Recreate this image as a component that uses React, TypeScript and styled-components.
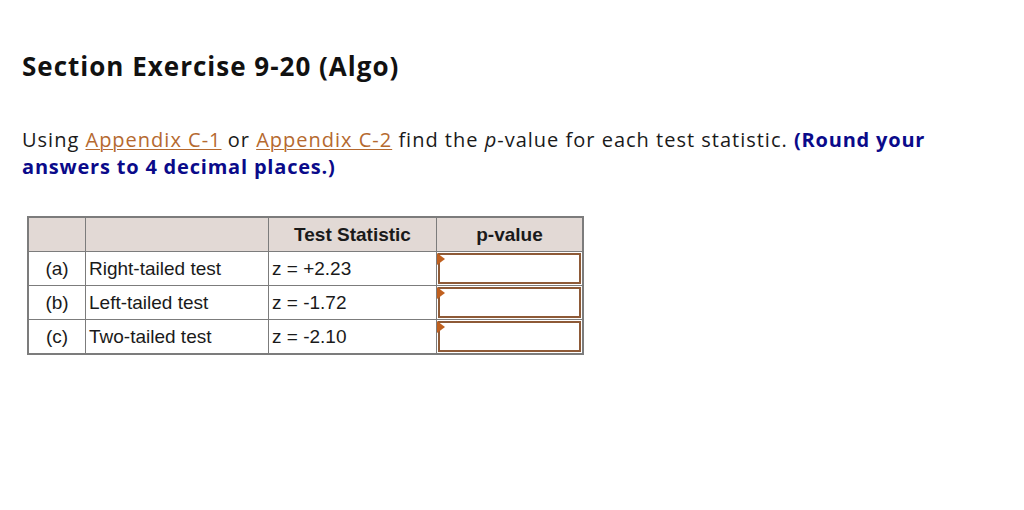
import React from 'react'
import styled, { createGlobalStyle } from 'styled-components'

const GlobalStyle = createGlobalStyle`
body {
  margin: 0;
  background: #ffffff;
  font-family: "Open Sans", Lato, sans-serif;
  color: #111111;
}
`

const rows = [
  { label: '(a)', kind: 'Right-tailed test', stat: 'z = +2.23' },
  { label: '(b)', kind: 'Left-tailed test', stat: 'z = -1.72' },
  { label: '(c)', kind: 'Two-tailed test', stat: 'z = -2.10' },
]

function App() {
  return (
    <>
      <GlobalStyle />
      <Page>
        <Title>Section Exercise 9-20 (Algo)</Title>
        <Prompt>
          Using <Link>Appendix C-1</Link> or <Link>Appendix C-2</Link> find the <em>p</em>-value for each test
          statistic. <Strong>(Round your answers to 4 decimal places.)</Strong>
        </Prompt>
        <Table>
          <thead>
            <tr>
              <Head></Head>
              <Head></Head>
              <Head>Test Statistic</Head>
              <Head>p-value</Head>
            </tr>
          </thead>
          <tbody>
            {rows.map((r) => (
              <tr key={r.label}>
                <Cell center>{r.label}</Cell>
                <Cell>{r.kind}</Cell>
                <Cell>{r.stat}</Cell>
                <InputCell>
                  <Answer />
                  <Flag />
                </InputCell>
              </tr>
            ))}
          </tbody>
        </Table>
      </Page>
    </>
  )
}

const Page = styled.div`
  width: 1024px;
  height: 510px;
  box-sizing: border-box;
  padding: 50px 22px 0 22px;
`

const Title = styled.h1`
  margin: 0;
  font-size: 26px;
  font-weight: 700;
  letter-spacing: 1px;
  line-height: 32px;
  color: #111;
`

const Prompt = styled.p`
  margin: 44px 0 0 0;
  max-width: 950px;
  font-size: 20px;
  letter-spacing: 1px;
  line-height: 27px;
  color: #1a1a1a;
  em {
    font-style: italic;
  }
`

const Link = styled.span`
  color: #b5692f;
  text-decoration: underline;
  text-underline-offset: 2px;
  text-decoration-thickness: 1px;
`

const Strong = styled.strong`
  color: #0a0a8a;
  font-weight: 700;
  letter-spacing: 0.8px;
`

const Table = styled.table`
  margin: 36px 0 0 5px;
  border-collapse: collapse;
  border: 2px solid #7c7c7c;
  font-family: "Liberation Sans", Arial, sans-serif;
  font-size: 19px;
  color: #1a1a1a;
  td,
  th {
    border: 1px solid #7c7c7c;
  }
`

const Head = styled.th`
  background: #e2d9d5;
  height: 33px;
  padding: 0;
  font-weight: 700;
  text-align: center;
  &:nth-child(1) {
    width: 56px;
  }
  &:nth-child(2) {
    width: 182px;
  }
  &:nth-child(3) {
    width: 167px;
  }
  &:nth-child(4) {
    width: 145px;
  }
`

const Cell = styled.td<{ center?: boolean }>`
  height: 33px;
  padding: 0 3px;
  text-align: ${(p) => (p.center ? 'center' : 'left')};
`

const InputCell = styled.td`
  position: relative;
  height: 33px;
  padding: 0;
`

const Answer = styled.div`
  height: 31px;
  margin: 1px;
  border: 2px solid #8e5a37;
  background: #fff;
  box-sizing: border-box;
`

const Flag = styled.span`
  position: absolute;
  top: 1px;
  left: 0;
  width: 0;
  height: 0;
  border-top: 6px solid transparent;
  border-bottom: 6px solid transparent;
  border-left: 8px solid #c0601f;
`

export default App
